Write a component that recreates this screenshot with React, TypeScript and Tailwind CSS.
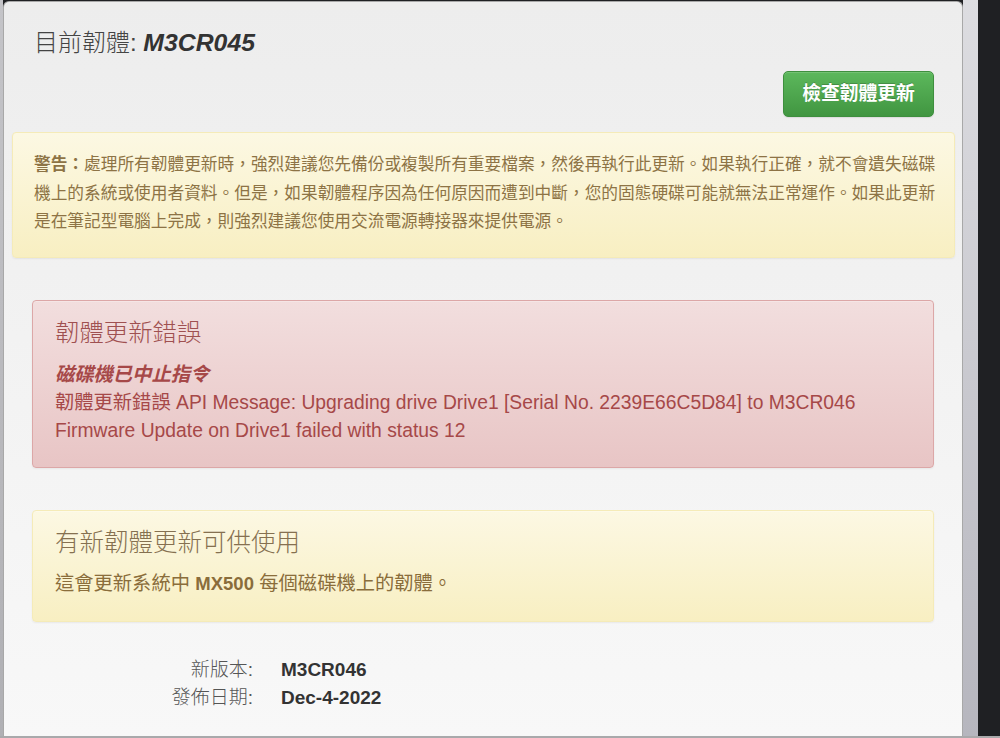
import React from "react";

const FONT = "font-['Liberation_Sans','Noto_Sans_CJK_TC',sans-serif]";

export default function App() {
  return (
    <div className={`w-[1000px] h-[738px] overflow-hidden flex flex-col bg-[#1f2023] ${FONT}`}>
      <div className="flex h-[736px]">
        <div className="w-[3px] bg-gradient-to-b from-[#c4c4c8] to-[#b0b0b4]" />
        <div className="w-[960px] mt-[1px] border border-b-0 border-[#a8a8a8] rounded-t-[6px] bg-gradient-to-b from-[#ededed] to-[#f8f8f8] flex flex-col">
          <h1 className="pl-[30px] pt-[25px] leading-[32px] text-[24px] text-[#444]">
            <span className="font-light">目前韌體:</span>{" "}
            <span className="font-bold italic text-[#333] text-[24.8px]">M3CR045</span>
          </h1>

          <div className="flex justify-end pr-[28px] mt-[12px]">
            <button className="w-[151px] h-[46px] rounded-[5px] border border-[#3e8f3e] bg-gradient-to-b from-[#5cb85c] to-[#419641] text-white font-bold text-[18.8px] [text-shadow:0_-1px_0_rgba(0,0,0,0.2)] shadow-[inset_0_1px_0_rgba(255,255,255,0.15),0_1px_1px_rgba(0,0,0,0.08)]">
              檢查韌體更新
            </button>
          </div>

          <div className="mt-[15px] ml-[8px] mr-[7px] rounded-[4px] border border-[#f5ebb8] bg-gradient-to-b from-[#fcf8e3] to-[#f8efc2] shadow-[0_1px_2px_rgba(0,0,0,0.06)] pl-[21px] pt-[18px] pb-[20.5px] text-[16.7px] leading-[28.5px] text-[#8d7345]">
            <div className="whitespace-nowrap">
              <span className="font-bold">警告：</span>處理所有韌體更新時，強烈建議您先備份或複製所有重要檔案，然後再執行此更新。如果執行正確，就不會遺失磁碟
            </div>
            <div className="whitespace-nowrap">
              機上的系統或使用者資料。但是，如果韌體程序因為任何原因而遭到中斷，您的固態硬碟可能就無法正常運作。如果此更新
            </div>
            <div className="whitespace-nowrap">
              是在筆記型電腦上完成，則強烈建議您使用交流電源轉接器來提供電源。
            </div>
          </div>

          <div className="mt-[42px] mx-[28px] rounded-[4px] border border-[#dca7a7] bg-gradient-to-b from-[#f2dede] to-[#e8c5c5] shadow-[inset_0_1px_0_rgba(255,255,255,0.25),0_1px_2px_rgba(0,0,0,0.05)] pl-[22px] pt-[16px] pb-[22px] text-[#a64848]">
            <div className="text-[24.4px] leading-[32px] font-light text-[#9f5050]">韌體更新錯誤</div>
            <div className="mt-[12px] text-[19.3px] leading-[28px] font-bold italic">磁碟機已中止指令</div>
            <div className="text-[19.3px] leading-[28px] whitespace-nowrap">
              韌體更新錯誤 API Message: Upgrading drive Drive1 [Serial No. 2239E66C5D84] to M3CR046
            </div>
            <div className="text-[19.3px] leading-[28px] whitespace-nowrap">
              Firmware Update on Drive1 failed with status 12
            </div>
          </div>

          <div className="mt-[42px] mx-[28px] rounded-[4px] border border-[#f5ebb8] bg-gradient-to-b from-[#fcf8e3] to-[#f8efc2] shadow-[inset_0_1px_0_rgba(255,255,255,0.25),0_1px_2px_rgba(0,0,0,0.06)] pl-[22px] pt-[16px] pb-[23px] text-[#8a6d3b]">
            <div className="text-[24.5px] leading-[32px] font-light text-[#857050]">有新韌體更新可供使用</div>
            <div className="mt-[11px] text-[19.3px] leading-[28px] whitespace-nowrap">
              這會更新系統中 <span className="font-bold text-[18.5px]">MX500</span> 每個磁碟機上的韌體。
            </div>
          </div>

          <div className="mt-[34px] grid grid-cols-[249px_1fr] gap-x-[28px] text-[19px] leading-[28px]">
            <div className="text-right text-[#555] font-light">新版本:</div>
            <div className="font-bold text-[#333]">M3CR046</div>
            <div className="text-right text-[#555] font-light">發佈日期:</div>
            <div className="font-bold text-[#333]">Dec-4-2022</div>
          </div>
        </div>
        <div className="w-[15px] bg-gradient-to-b from-[#dddde1] to-[#b6b6be]" />
        <div className="flex-1 bg-[#1f2023]" />
      </div>
      <div className="h-[2px] bg-[#a9a9ab]" />
    </div>
  );
}
